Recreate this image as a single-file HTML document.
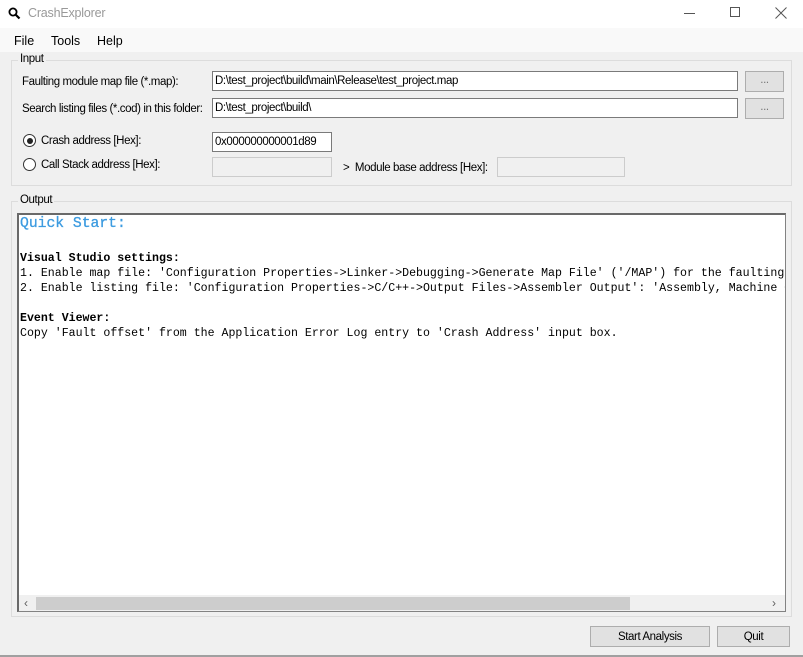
<!DOCTYPE html>
<html><head><meta charset="utf-8"><style>
*{box-sizing:border-box;margin:0;padding:0}
body{width:803px;height:657px;overflow:hidden;background:#f0f0f0;font-family:"Liberation Sans",sans-serif;font-size:11.5px;letter-spacing:-0.4px;color:#000;position:relative}
.a{position:absolute}
.tb{left:0;top:0;width:803px;height:28px;background:#fff}
.mb{left:0;top:28px;width:803px;height:24px;background:#f9f9f9}
.gb{border:1px solid #dcdcdc}
.in{background:#fff;border:1px solid #7a7a7a;height:20px;padding:3px 2px 0;white-space:nowrap;overflow:hidden}
.dis{background:#f0f0f0;border:1px solid #ccc;height:20px}
.btn{background:#e1e1e1;border:1px solid #adadad;text-align:center}
.mono{font-family:"Liberation Mono",monospace;font-size:11.58px;letter-spacing:0;white-space:pre;line-height:15px}
.lbl{white-space:nowrap}
.rad{width:13px;height:13px;border:1px solid #333;border-radius:50%;background:#fff}
</style></head><body>
<div class="a tb"></div>
<svg class="a" style="left:8px;top:7px" width="13" height="13" viewBox="0 0 13 13"><circle cx="5" cy="5" r="3.6" fill="none" stroke="#000" stroke-width="1.8"/><path d="M7.5 7.5L11.5 11.5" stroke="#000" stroke-width="2.2"/></svg>
<div class="a" style="left:28px;top:6px;color:#999;font-size:12.5px;letter-spacing:-0.2px">CrashExplorer</div>
<div class="a" style="left:684px;top:13px;width:11px;height:1px;background:#555"></div>
<div class="a" style="left:730px;top:7px;width:10px;height:10px;border:1px solid #555"></div>
<svg class="a" style="left:775px;top:7px" width="12" height="12"><path d="M0.5 0.5L11.5 11.5M11.5 0.5L0.5 11.5" stroke="#555" stroke-width="1"/></svg>
<div class="a mb"></div>
<div class="a lbl" style="left:14px;top:34px;font-size:12.5px;letter-spacing:0">File</div>
<div class="a lbl" style="left:51px;top:34px;font-size:12.5px;letter-spacing:0">Tools</div>
<div class="a lbl" style="left:97px;top:34px;font-size:12.5px;letter-spacing:0">Help</div>

<div class="a gb" style="left:11px;top:60px;width:781px;height:126px"></div>
<div class="a lbl" style="left:18px;top:53px;background:#f0f0f0;padding:0 2px">Input</div>
<div class="a lbl" style="left:22px;top:76px">Faulting module map file (*.map):</div>
<div class="a in" style="left:212px;top:71px;width:526px">D:\test_project\build\main\Release\test_project.map</div>
<div class="a btn" style="left:745px;top:71px;width:39px;height:21px;line-height:17px;color:#777">...</div>
<div class="a lbl" style="left:22px;top:103px">Search listing files (*.cod) in this folder:</div>
<div class="a in" style="left:212px;top:98px;width:526px">D:\test_project\build\</div>
<div class="a btn" style="left:745px;top:98px;width:39px;height:21px;line-height:17px;color:#777">...</div>
<div class="a rad" style="left:23px;top:134px"><div class="a" style="left:2.5px;top:2.5px;width:6px;height:6px;border-radius:50%;background:#222"></div></div>
<div class="a lbl" style="left:41px;top:135px">Crash address [Hex]:</div>
<div class="a in" style="left:212px;top:132px;width:120px">0x000000000001d89</div>
<div class="a rad" style="left:23px;top:158px"></div>
<div class="a lbl" style="left:41px;top:159px">Call Stack address [Hex]:</div>
<div class="a dis" style="left:212px;top:157px;width:120px"></div>
<div class="a lbl" style="left:343px;top:162px">&gt;&nbsp; Module base address [Hex]:</div>
<div class="a dis" style="left:497px;top:157px;width:128px"></div>

<div class="a gb" style="left:11px;top:201px;width:781px;height:416px"></div>
<div class="a lbl" style="left:18px;top:194px;background:#f0f0f0;padding:0 2px">Output</div>
<div class="a" style="left:17px;top:213px;width:769px;height:399px;background:#fff;border:1px solid #828282;border-top:2px solid #696969;border-left:2px solid #696969;overflow:hidden">
<div class="a" style="left:1px;top:1px;font-family:'Liberation Mono',monospace;font-size:14.7px;letter-spacing:0;color:#3c9be0;white-space:pre;-webkit-text-stroke:0.3px #3c9be0">Quick Start:</div>
<div class="a mono" style="left:1px;top:36px"><b>Visual Studio settings:</b>
1. Enable map file: 'Configuration Properties-&gt;Linker-&gt;Debugging-&gt;Generate Map File' ('/MAP') for the faulting module
2. Enable listing file: 'Configuration Properties-&gt;C/C++-&gt;Output Files-&gt;Assembler Output': 'Assembly, Machine Code

<b>Event Viewer:</b>
Copy 'Fault offset' from the Application Error Log entry to 'Crash Address' input box.</div>
<div class="a" style="left:0;top:380px;width:767px;height:17px;background:#f0f0f0"></div>
<div class="a" style="left:17px;top:382px;width:594px;height:13px;background:#cdcdcd"></div>
<div class="a" style="left:5px;top:381px;color:#606060;font-size:12px">&lsaquo;</div>
<div class="a" style="left:753px;top:381px;color:#606060;font-size:12px">&rsaquo;</div>
</div>

<div class="a btn" style="left:590px;top:626px;width:120px;height:21px;line-height:20px">Start Analysis</div>
<div class="a btn" style="left:717px;top:626px;width:73px;height:21px;line-height:20px">Quit</div>
<div class="a" style="left:0;top:655px;width:803px;height:2px;background:#a0a0a0"></div>
</body></html>
